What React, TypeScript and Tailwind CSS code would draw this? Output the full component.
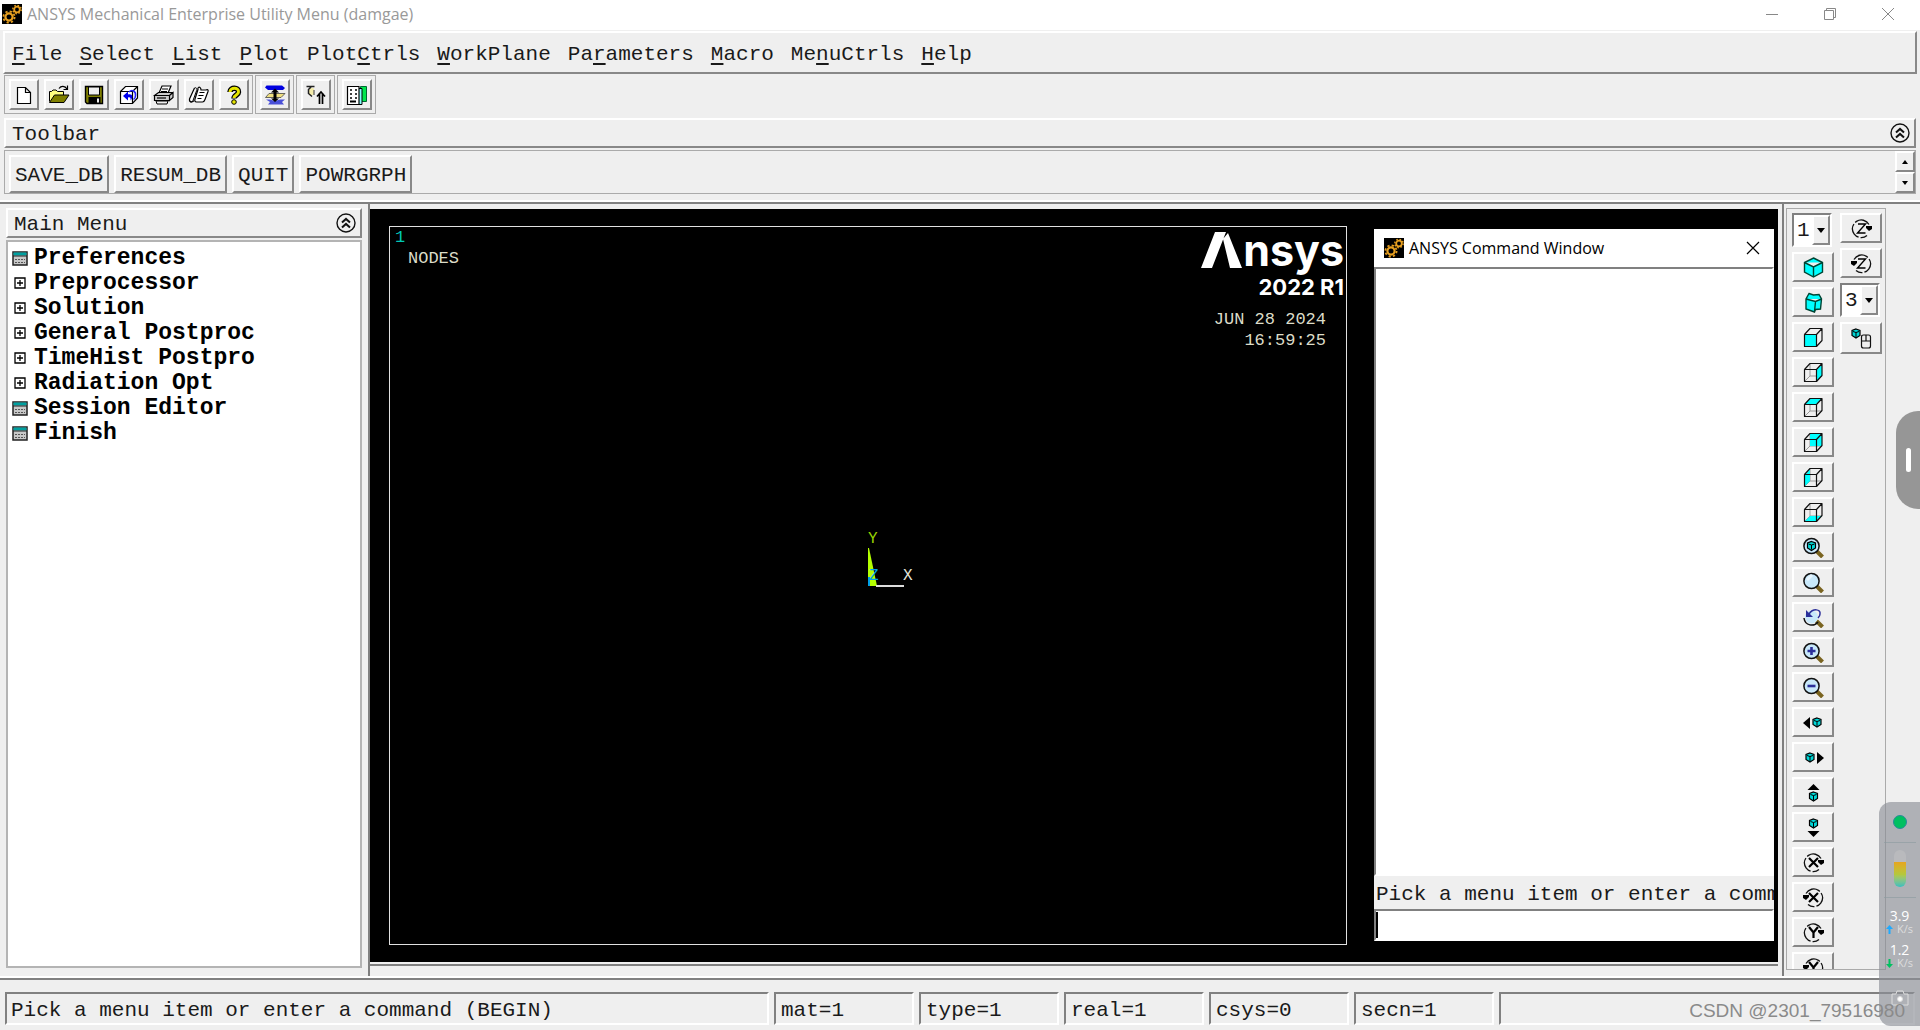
import React from "react";

const MONO = "font-['Liberation_Mono',monospace]";
const RAISED =
  "border-2 border-t-white border-l-white border-r-[#888] border-b-[#888] bg-[#efefef]";
const SUNKEN =
  "border-2 border-t-[#808080] border-l-[#808080] border-r-white border-b-white";
const CYAN = "#00ffff";

function Gears({ size = 20 }: { size?: number }) {
  return (
    <svg width={size} height={size} viewBox="0 0 20 20" className="shrink-0">
      <rect width="20" height="20" fill="#000" />
      <g fill="none" stroke="#e8a020">
        <circle cx="7" cy="13" r="3.6" strokeWidth="2.2" />
        <circle cx="7" cy="13" r="5.6" strokeWidth="1.8" strokeDasharray="2.2 2.2" />
        <circle cx="15" cy="5.5" r="2.8" strokeWidth="1.8" />
        <circle cx="15" cy="5.5" r="4.2" strokeWidth="1.4" strokeDasharray="1.6 1.7" />
      </g>
    </svg>
  );
}

function DoubleChevron() {
  return (
    <svg width="20" height="20" viewBox="0 0 20 20" fill="none" stroke="#111" strokeWidth="1.4">
      <circle cx="10" cy="10" r="9" />
      <path d="M6 9.5l4-3.6 4 3.6M6 14.5l4-3.6 4 3.6" strokeWidth="2" />
    </svg>
  );
}

const toolIcons: Record<string, React.ReactNode> = {
  New: <path d="M4.500 3.500h8l5 5v11h-13zM12.500 3.500v5h5" fill="#fff" stroke="#000" strokeWidth="1.200" />,
  Open: (
    <>
      <path d="M1.5 17.500V7.500h2l1.500-1.500h3l1.500 1.500h6v3.500" fill="#ffff80" stroke="#000" />
      <path d="M1.500 18.500l5-7.500h14.500l-5 7.500z" fill="#808000" stroke="#000" />
      <path d="M11 4.500c2-3 6-3 8 0.500M19.500 1.500v4h-4" fill="none" stroke="#000" strokeWidth="1.2" />
    </>
  ),
  Save: (
    <>
      <path d="M2.500 2.500h17v17h-15.500l-1.500-1.500z" fill="#808000" stroke="#000" strokeWidth="1.400" />
      <path d="M5.500 3h11v8h-11z" fill="#efefef" stroke="#000" />
      <path d="M5.500 13h12v6.500h-12z" fill="#000" />
      <path d="M14 14.500h2v4h-2z" fill="#eee" />
    </>
  ),
  Plot: (
    <>
      <path d="M2.500 7.500l5-5h12v11.500l-5 5.500h-12zM2.500 7.500h12v12M14.500 7.500l5-5" fill="#fff" stroke="#000" strokeWidth="1.200" />
      <path d="M5 12l5-4.500v3c5-1 5.500 3 2.500 6 .5-3-.5-3.500-2.500-3v3z" fill="#0000f0" />
      <path d="M11 8c3-3 7-1 6.500 3.500 0 2-1 3.500-2 4" fill="none" stroke="#22f" strokeWidth="1.600" />
    </>
  ),
  Print: (
    <>
      <path d="M6 9l3-7h9l-3 7" fill="#fff" stroke="#000" strokeWidth="1.200" />
      <path d="M9 5h6M8 7.500h6" stroke="#000" />
      <path d="M1.500 11.500l4-3h14l-3 3zM1.500 11.500h15v5h-15zM16.500 11.500l3.500-3v5l-3.500 3z" fill="#ccc" stroke="#000" strokeWidth="1.200" />
      <path d="M3 17h12l-1 3H4z" fill="#efefef" stroke="#000" />
      <path d="M4 14h9" stroke="#000" strokeWidth="1.200" />
    </>
  ),
  Report: (
    <>
      <path d="M6.500 4l-5 11c-.5 3 3 4 4.500 1.500" fill="#fff" stroke="#000" strokeWidth="1.200" />
      <path d="M6.500 4c2-1 3 1 2 3L5 16.500c-1 2-3 2-3.500 0" fill="none" stroke="#000" />
      <path d="M12 3.500c-1-1-2.500 0-2 2L7 15c-.5 2 0 3 1.500 3h6c1.500 0 2-1 2.500-2.500l3-8c.5-1.500-.5-2.500-2-1.500h-5c0-1-.2-2-1-2.500z" fill="#fff" stroke="#000" strokeWidth="1.200" />
      <path d="M11.500 8.500h5M10.500 11.500h5M9.500 14.500h4" stroke="#000" />
    </>
  ),
  Help: (
    <>
      <path d="M7 8c0-5 9-5 8.500 0 0 3-4.500 3-4.500 6.500" fill="none" stroke="#000" strokeWidth="5.500" />
      <path d="M7 8c0-5 9-5 8.500 0 0 3-4.500 3-4.500 6" fill="none" stroke="#e6e600" strokeWidth="3" />
      <circle cx="11" cy="18" r="2.300" fill="#e6e600" stroke="#000" />
    </>
  ),
  Raise: (
    <>
      <path d="M1 3.500L2.500 1.500H18L21 4l-2 2H4z" fill="#0000e0" />
      <path d="M1.500 13.500L5 9.500h16l-4 4z" fill="#f0e080" stroke="#444" strokeWidth=".8" />
      <path d="M2 15.500h4l5 1.500 5-1.500h5L18 18l2 2.500H4L6 18z" fill="#4a50d8" />
      <path d="M11 4.500l4 4h-2.500v6H15l-4 3.500-4-3.500h2.500v-6H7z" fill="#000" />
    </>
  ),
  Reset: (
    <>
      <path d="M5.500 3.500l3.500 1v6l-4 1-2-3.500z" fill="#f4ecab" />
      <path d="M1.500 2.500h8M6 3L3.500 5.500v4L7 12.500" fill="none" stroke="#222" strokeWidth="1.500" />
      <path d="M9 6v5" stroke="#555" strokeWidth="1.200" />
      <path d="M14.500 20v-11M17.500 20v-11M12 12.500l4-4.500 4 4.500" fill="none" stroke="#000" strokeWidth="1.700" />
    </>
  ),
  Contact: (
    <>
      <path d="M14.500 2.500h6v15h-6z" fill="#00e64d" stroke="#063" />
      <path d="M11 4.500h5v16h-5z" fill="#8ff" stroke="#000" />
      <path d="M1.500 2.500h11.500v18H1.500z" fill="#fff" stroke="#000" strokeWidth="1.200" />
      <path d="M4 6h3M9 6h2.500M4 10h3M9 10h2.500M4 14h3M9 14h2.500" stroke="#000" strokeWidth="1.500" strokeDasharray="2 1" />
      <path d="M4 16.500h6v2H4z" fill="#000" />
    </>
  ),
};

function ToolButton({ name }: { name: string }) {
  return (
    <button aria-label={name} className={`flex h-[31px] w-[30px] items-center justify-center ${RAISED}`}>
      <svg width="22" height="22" viewBox="0 0 22 22" className="shrink-0">
        {toolIcons[name]}
      </svg>
    </button>
  );
}

function MiniCube({ x, y }: { x: number; y: number }) {
  return (
    <g transform={`translate(${x} ${y})`}>
      <path d="M4 0l4 1.500v5L4 9 0 6.500v-5z" fill="#00d8d8" stroke="#000" strokeWidth="1.200" />
      <path d="M1 2.500l3 1 3-1M4 3.500V8" fill="none" stroke="#000" />
    </g>
  );
}

function WireCube({ face, solid }: { face: string; solid?: boolean }) {
  return (
    <g strokeLinejoin="round">
      {!solid && <path d="M7 2v12h12M7 14l-6 6" fill="none" stroke="#999" />}
      <polygon points={face} fill={CYAN} />
      <path d="M1.500 7.500h12v12h-12zM1.500 7.500l5.500-6h12v12l-5.500 6M13.500 7.500l5.500-6" fill="none" stroke="#111" strokeWidth="1.200" />
    </g>
  );
}

function Lens({ children }: { children?: React.ReactNode }) {
  return (
    <>
      <path d="M13.500 14l6 6" stroke="#7a6420" strokeWidth="4" />
      <circle cx="8.500" cy="9" r="7.600" fill="#c8e8fa" stroke="#111" strokeWidth="1.500" />
      {children}
    </>
  );
}

function Spin({ axis, ccw }: { axis: string; ccw?: boolean }) {
  const glyph: Record<string, string> = {
    X: "M6 6l9 9M15 6l-9 9",
    Y: "M6 5l4.500 5.500L15 5M10.500 10v6",
    Z: "M7 6h7.500L6.500 15h8",
  };
  return (
    <>
      <g transform={ccw ? "translate(21 0) scale(-1 1)" : undefined}>
        <path d="M18 6.500A8.800 8.800 0 1 0 16 17.500" fill="none" stroke="#111" strokeWidth="1.300" strokeDasharray="16 2" />
        <path d="M15 8h6v3l-3 2-3-3z" fill="#000" />
      </g>
      <path d={glyph[axis]} fill="none" stroke="#000" strokeWidth={axis === "Z" ? 1.4 : 2.2} />
    </>
  );
}

const viewIcons: [string, React.ReactNode][] = [
  ["Isometric view", <path key="i" d="M10.500 1l9 4.500v9.500l-9 5-9-5V5.500zM1.500 5.500l9 4.500 9-4.500M10.500 10v10" fill={CYAN} stroke="#043" strokeWidth="1.400" />],
  ["Oblique view", <path key="o" d="M6 1.500l4.500 1.500 5.500-.5 2.500 4.500-1 10-5 .5-1 2.500-8.500-3V7zM3 7l9.500 2.500L18.500 7M12.500 9.500l-1 10" fill={CYAN} stroke="#043" strokeWidth="1.400" />],
  ["Front view", <WireCube key="f" solid face="1,8 13,8 13,20 1,20" />],
  ["Right view", <WireCube key="r" face="14,8 19,2 19,14 14,19" />],
  ["Top view", <WireCube key="t" face="2,7 7,2 19,2 13,7" />],
  ["Back view", <WireCube key="b" face="7,2 19,2 19,14 7,14" />],
  ["Left view", <WireCube key="l" face="2,8 7,2 7,14 2,19" />],
  ["Bottom view", <WireCube key="u" face="2,19 7,14 19,14 13,19" />],
  ["Fit view", <Lens key="z"><MiniCube x={4.5} y={4.5} /></Lens>],
  ["Zoom model", <Lens key="zm"><path d="M4 8l5-5" stroke="#e8f6ff" strokeWidth="3" /></Lens>],
  ["Back up zoom", <g key="zb"><path d="M13.500 14l6 6" stroke="#7a6420" strokeWidth="4" /><circle cx="8.500" cy="10" r="6.500" fill="#c8e8fa" /><path d="M1 11c1 8 10 9 14 4" fill="none" stroke="#111" strokeWidth="1.500" /><path d="M6 7c4-6 12-5 11 0 0 2-1 3-2 4" fill="none" stroke="#2b2f9a" strokeWidth="1.500" /><path d="M3 3v7h7z" fill="#2b2f9a" /></g>],
  ["Zoom in", <Lens key="zi"><path d="M4.500 9h8M8.500 5v8" stroke="#2b2f9a" strokeWidth="2.600" /></Lens>],
  ["Zoom out", <Lens key="zo"><path d="M4.500 9h8" stroke="#2b2f9a" strokeWidth="2.600" /></Lens>],
  ["Pan left", <g key="pl"><path d="M7 5v12L0 11z" /><MiniCube x={10} y={6} /></g>],
  ["Pan right", <g key="pr"><path d="M14 5v12l7-6z" /><MiniCube x={3} y={6} /></g>],
  ["Pan up", <g key="pu"><path d="M4.500 8h12l-6-6z" /><MiniCube x={6.5} y={10} /></g>],
  ["Pan down", <g key="pd"><path d="M4.500 14h12l-6 6z" /><MiniCube x={6.5} y={2} /></g>],
  ["Rotate +X", <Spin key="rx" axis="X" />],
  ["Rotate -X", <Spin key="rmx" axis="X" ccw />],
  ["Rotate +Y", <Spin key="ry" axis="Y" />],
  ["Rotate -Y", <Spin key="rmy" axis="Y" ccw />],
];

function ViewButton({ label, children, tall }: { label: string; children: React.ReactNode; tall?: boolean }) {
  return (
    <button
      aria-label={label}
      className={`flex w-[42px] shrink-0 items-center justify-center ${tall ? "h-8" : "h-[30px]"} ${RAISED}`}
    >
      <svg width="21" height="21" viewBox="0 0 21 21" className="shrink-0">
        {children}
      </svg>
    </button>
  );
}

function Combo({ label, value }: { label: string; value: string }) {
  return (
    <div className={`relative h-[34px] w-10 shrink-0 bg-white ${SUNKEN}`}>
      <select
        aria-label={label}
        defaultValue={value}
        className={`h-full w-full appearance-none bg-white pl-[3px] text-[21px] leading-none outline-none ${MONO}`}
      >
        <option>{value}</option>
      </select>
      <span className={`pointer-events-none absolute inset-y-0 right-0 flex w-[18px] items-center justify-center ${RAISED}`}>
        <span className="border-x-4 border-t-[5px] border-x-transparent border-t-black" />
      </span>
    </div>
  );
}

const menus: [string, string, string][] = [
  ["", "F", "ile"],
  ["", "S", "elect"],
  ["", "L", "ist"],
  ["", "P", "lot"],
  ["Plot", "C", "trls"],
  ["", "W", "orkPlane"],
  ["Pa", "r", "ameters"],
  ["", "M", "acro"],
  ["Me", "n", "uCtrls"],
  ["", "H", "elp"],
];

const tree: [string, boolean][] = [
  ["Preferences", false],
  ["Preprocessor", true],
  ["Solution", true],
  ["General Postproc", true],
  ["TimeHist Postpro", true],
  ["Radiation Opt", true],
  ["Session Editor", false],
  ["Finish", false],
];

function TreeIcon({ branch }: { branch: boolean }) {
  return branch ? (
    <svg width="16" height="16" viewBox="0 0 16 16" className="shrink-0">
      <path d="M3 2h10v10H3zM5 7h6M8 4v6" fill="none" stroke="#000" strokeWidth="1.300" />
    </svg>
  ) : (
    <svg width="16" height="16" viewBox="0 0 16 16" className="shrink-0">
      <rect x="1" y="1" width="14" height="13" fill="#c8c8c8" stroke="#222" strokeWidth="1.500" />
      <rect x="1.500" y="1.500" width="13" height="3" fill="#00a0a0" />
      <path d="M1 5h14" stroke="#222" />
      <path d="M3 8.500h10M3 11.500h10" stroke="#555" strokeDasharray="2 1" />
    </svg>
  );
}

const status = ["mat=1", "type=1", "real=1", "csys=0", "secn=1"];

function Graphics() {
  return (
    <div className={`relative mt-[17px] mb-[17px] flex-1 border border-[#e0e0e0] text-[17px] leading-[21px] text-[#dcdcc8] ${MONO}`}>
      <div className="flex justify-between">
        <div className="pl-[5px]">
          <div className="text-[#00c8b4]">1</div>
          <div className="pl-[13px]">NODES</div>
        </div>
        <div className="text-right text-white">
          <div className="flex items-end justify-end pr-0.5 pt-1 font-['Inter',sans-serif] font-bold">
            <svg width="42" height="36" viewBox="0 0 42 36" className="mb-px">
              <path d="M0 36L14 0h11L11 36zM22 7l5-6 14 35H29z" fill="#fff" />
            </svg>
            <span className="text-[43px] leading-[38px]">nsys</span>
          </div>
          <div className="pt-1 pr-0.5 font-['Inter',sans-serif] text-[22px] leading-[28px] font-bold">
            2022 R1
          </div>
          <div className="pt-2 pr-5 text-[#dcdcc8]">
            <div>JUN 28 2024</div>
            <div>16:59:25</div>
          </div>
        </div>
      </div>
      <svg
        width="56"
        height="64"
        viewBox="0 0 56 64"
        className="absolute top-1/2 left-1/2 -translate-y-[53px] overflow-visible"
      >
        <path d="M1 15l8 38H0V15z" fill="#b4ff00" />
        <path d="M1 44v9" stroke="#00a0e6" strokeWidth="2" />
        <path d="M8 53h28" stroke="#ddd" strokeWidth="2" />
        <text x="0" y="10" fontSize="16" fill="#96d200">Y</text>
        <text x="1" y="47" fontSize="16" fill="#00a0e6">Z</text>
        <text x="35" y="47" fontSize="16" fill="#e6e6dc">X</text>
      </svg>
    </div>
  );
}

function CommandWindow() {
  return (
    <section className="mt-5 mb-[21px] flex w-[400px] shrink-0 flex-col bg-[#efefef]">
      <header className="flex h-[38px] shrink-0 items-center bg-white pr-[14px] pl-[10px] font-['Open_Sans',sans-serif] text-[16px] text-black">
        <Gears />
        <h2 className="flex-1 pl-[5px]">ANSYS Command Window</h2>
        <button aria-label="Close command window">
          <svg width="14" height="14" viewBox="0 0 14 14" stroke="#000" strokeWidth="1.200">
            <path d="M1 1l12 12M13 1L1 13" />
          </svg>
        </button>
      </header>
      <div className={`flex-1 bg-white ${SUNKEN}`} />
      <label htmlFor="cmd" className={`h-[33px] overflow-hidden pl-0.5 text-[21px] leading-[37px] whitespace-nowrap ${MONO}`}>
        Pick a menu item or enter a command (BEGIN)
      </label>
      <div className={`flex h-8 bg-white ${SUNKEN}`}>
        <span className="my-px w-0.5 bg-black" />
        <input id="cmd" className={`min-w-0 flex-1 bg-white text-[21px] outline-none ${MONO}`} />
      </div>
    </section>
  );
}

function Rate({ value, color, up }: { value: string; color: string; up?: boolean }) {
  return (
    <div className="flex flex-col items-center text-[14px] leading-[15px]">
      <span>{value}</span>
      <span className="flex items-center gap-1 text-[11px] leading-[12px] text-[#ddd]">
        <svg width="7" height="9" viewBox="0 0 7 9" fill={color}>
          <path d={up ? "M3.500 0L7 4H4.500v5h-2V4H0z" : "M3.500 9L7 5H4.500V0h-2v5H0z"} />
        </svg>
        K/s
      </span>
    </div>
  );
}

export default function App() {
  return (
    <div className={`relative flex h-screen flex-col overflow-hidden bg-[#efefef] text-[21px] leading-6 text-[#1a1a1a] ${MONO}`}>
      <header className="flex h-[30px] shrink-0 items-center bg-white pr-[26px] pb-0.5 pl-0.5 font-['Open_Sans',sans-serif] text-[16px] text-[#999]">
        <Gears />
        <h1 className="flex-1 pl-[5px]">ANSYS Mechanical Enterprise Utility Menu (damgae)</h1>
        <div className="flex gap-[46px]">
          <button aria-label="Minimize">
            <svg width="12" height="12" stroke="#888"><path d="M0 6.500h12" /></svg>
          </button>
          <button aria-label="Restore">
            <svg width="12" height="12" fill="none" stroke="#888"><path d="M.5 2.500h9v9h-9zM2.500 2.500v-2h9v9h-2" /></svg>
          </button>
          <button aria-label="Close">
            <svg width="12" height="12" stroke="#888"><path d="M0 0l12 12M12 0L0 12" /></svg>
          </button>
        </div>
      </header>

      <nav className="mx-[3px] mt-px flex h-[43px] shrink-0 items-center gap-[17px] border-2 border-t-white border-r-[#888] border-b-[#888] border-l-white pt-1 pl-[7px]">
        {menus.map(([a, b, c]) => (
          <button key={a + b + c} className="leading-6">
            {a}
            <span className="underline decoration-2 underline-offset-[3px]">{b}</span>
            {c}
          </button>
        ))}
      </nav>

      <div className="flex shrink-0 gap-0.5 pt-px pl-1">
        <div className="flex gap-[5px] border border-[#aaa] p-[3px] pl-1">
          {["New", "Open", "Save", "Plot", "Print", "Report", "Help"].map((n) => (
            <ToolButton key={n} name={n} />
          ))}
        </div>
        {["Raise", "Reset", "Contact"].map((n) => (
          <div key={n} className="border border-[#aaa] py-[3px] pr-[3px] pl-1">
            <ToolButton name={n} />
          </div>
        ))}
      </div>

      <div className={`mx-1 mt-1 flex h-[30px] shrink-0 items-center justify-between pr-1 pl-[6px] ${RAISED}`}>
        <span className="pt-[3px]">Toolbar</span>
        <button aria-label="Collapse toolbar"><DoubleChevron /></button>
      </div>

      <div className="mx-1 mt-0.5 flex h-[44px] shrink-0 items-stretch gap-[5px] border border-[#aaa] pt-1 pl-1">
        {["SAVE_DB", "RESUM_DB", "QUIT", "POWRGRPH"].map((n) => (
          <button key={n} className={`px-1 pt-[3px] ${RAISED}`}>{n}</button>
        ))}
        <div className="-mt-1 ml-auto flex w-5 flex-col">
          <button aria-label="Scroll up" className={`flex flex-1 items-center justify-center ${RAISED}`}>
            <span className="border-x-[3px] border-b-4 border-x-transparent border-b-black" />
          </button>
          <button aria-label="Scroll down" className={`flex flex-1 items-center justify-center ${RAISED}`}>
            <span className="border-x-[3px] border-t-4 border-x-transparent border-t-black" />
          </button>
        </div>
      </div>

      <div className="mt-[6px] h-1 shrink-0 border-t-2 border-b-2 border-t-white border-b-[#808080]" />

      <main className="flex min-h-0 flex-1">
        <aside className="flex w-[370px] shrink-0 flex-col border-r-2 border-r-[#808080] pt-1 pr-[6px] pb-2 pl-[6px]">
          <div className={`flex h-[30px] shrink-0 items-center justify-between pr-1 pl-[6px] ${RAISED}`}>
            <span className="pt-[3px]">Main Menu</span>
            <button aria-label="Collapse main menu"><DoubleChevron /></button>
          </div>
          <ul className="mt-0.5 flex-1 border-2 border-[#b4b4b4] bg-white pt-1 pl-1 text-[23px] leading-[25px] font-bold text-black">
            {tree.map(([label, branch]) => (
              <li key={label}>
                <button className="flex items-center gap-[6px]">
                  <TreeIcon branch={branch} />
                  {label}
                </button>
              </li>
            ))}
          </ul>
        </aside>

        <div className="flex min-w-0 flex-1 flex-col pt-[5px] pr-1 pb-[10px]">
          <div className="flex min-h-0 flex-1 gap-[27px] bg-black pr-1 pl-[19px]">
            <Graphics />
            <CommandWindow />
          </div>
          <div className="mt-0.5 h-0.5 bg-[#808080]" />
        </div>

        <aside className="w-[138px] shrink-0 border-l-2 border-l-[#808080] pt-1 pb-[6px] pl-[2px]">
          <div className="flex h-full w-[100px] gap-[6px] overflow-hidden border border-[#aaa] pt-1 pl-[5px]">
            <div className="flex flex-col gap-[5px] overflow-hidden">
              <Combo label="Active window" value="1" />
              {viewIcons.map(([label, icon]) => (
                <ViewButton key={label} label={label}>{icon}</ViewButton>
              ))}
            </div>
            <div className="flex flex-col gap-[5px]">
              <ViewButton label="Rotate +Z"><Spin axis="Z" /></ViewButton>
              <ViewButton label="Rotate -Z"><Spin axis="Z" ccw /></ViewButton>
              <Combo label="Rate" value="3" />
              <ViewButton label="Dynamic model mode" tall>
                <MiniCube x={1} y={1} />
                <path d="M10.500 9q0-2 2-2h5q2 0 2 2v9q0 2-2 2h-5q-2 0-2-2zM10.500 13h9M15 7v6" fill="#eee" stroke="#111" strokeWidth="1.200" />
              </ViewButton>
            </div>
          </div>
        </aside>
      </main>

      <div className="h-1 shrink-0 border-t-2 border-b-2 border-t-white border-b-[#808080]" />

      <footer className="flex shrink-0 gap-[5px] px-[5px] pt-3 pb-[5px]">
        <div className={`h-[33px] w-2/5 pl-1 leading-[34px] ${SUNKEN}`}>
          Pick a menu item or enter a command (BEGIN)
        </div>
        {status.map((s) => (
          <div key={s} className={`h-[33px] w-[140px] pl-[5px] leading-[34px] ${SUNKEN}`}>{s}</div>
        ))}
        <div className={`h-[33px] flex-1 ${SUNKEN}`} />
      </footer>

      <div className="absolute top-[411px] right-0 flex h-[98px] w-6 items-center justify-center rounded-l-[22px] bg-[#969696]">
        <span className="h-6 w-[5px] rounded-full bg-white" />
      </div>

      <div className="absolute right-0 bottom-1 flex h-[224px] w-[41px] flex-col items-center rounded-l-xl bg-[#8c8f96]/65 pt-[13px] font-['Open_Sans',sans-serif] text-white">
        <span className="size-[14px] rounded-full border border-[#2b8a9a] bg-[#00c060]" />
        <span className="mt-[13px] h-px w-8 bg-[#8a9a9f]/60" />
        <span className="mt-[7px] flex h-[37px] w-3 flex-col justify-end overflow-hidden rounded-full bg-[#b9babd]">
          <span className="h-[25px] bg-linear-to-b from-[#e6a520] via-[#b4c83c] to-[#32bebe]" />
        </span>
        <span className="mt-[10px] h-px w-8 bg-[#8a9a9f]/60" />
        <div className="mt-[10px] flex flex-col gap-[7px]">
          <Rate value="3.9" color="#1eaaff" up />
          <Rate value="1.2" color="#00c060" />
        </div>
        <svg width="18" height="16" viewBox="0 0 18 16" fill="none" stroke="#ddd" className="mt-[21px]">
          <path d="M1 4h4l1-3h6l1 3h4v11H1z" />
          <circle cx="9" cy="9" r="2.500" fill="#fff" />
        </svg>
      </div>

      <div className="absolute right-[15px] bottom-[7px] font-['Liberation_Sans',sans-serif] text-[19px] leading-6 text-[#8a8a8a]">
        CSDN @2301_79516980
      </div>
    </div>
  );
}
